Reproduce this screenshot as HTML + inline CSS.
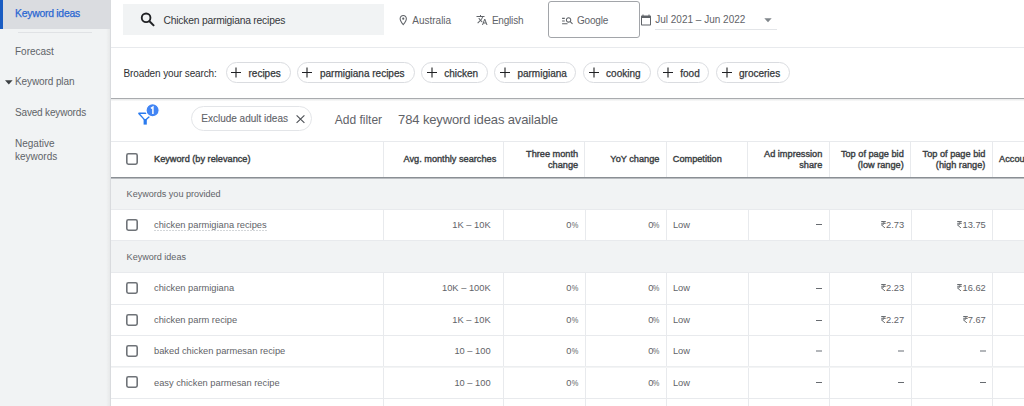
<!DOCTYPE html>
<html><head><meta charset="utf-8"><style>
html,body{margin:0;padding:0;}
body{width:1024px;height:406px;overflow:hidden;position:relative;background:#fff;font-family:"Liberation Sans", sans-serif;}
.t{position:absolute;white-space:nowrap;}
.r{position:absolute;box-sizing:content-box;}
svg.r{overflow:visible}
</style></head><body>
<div class="r" style="left:0px;top:0px;width:110px;height:406px;background:#f1f3f4"></div>
<div class="r" style="left:106px;top:0px;width:4px;height:406px;background:linear-gradient(90deg,rgba(0,0,0,0),rgba(0,0,0,0.045))"></div>
<div class="r" style="left:110px;top:0px;width:1px;height:406px;background:#d9dbde"></div>
<div class="r" style="left:0px;top:0px;width:110px;height:29px;background:#dadce0"></div>
<div class="r" style="left:0px;top:0px;width:3px;height:29px;background:#1a5cc2"></div>
<div class="r" style="left:18px;top:32px;width:74px;height:1px;background:#e0e2e5"></div>
<div class="t" style="left:15.00px;top:9.10px;font-size:10.4px;line-height:10.4px;color:#2a67d2;-webkit-text-stroke:0.25px #2a67d2;letter-spacing:-0.25px;">Keyword ideas</div>
<div class="t" style="left:15.00px;top:46.53px;font-size:10px;line-height:10px;color:#5f6368;">Forecast</div>
<svg class="r" style="left:4px;top:79px" width="10" height="7" viewBox="0 0 10 7"><path d="M1 1.3h7.6L4.8 5.4z" fill="#3c4043"/></svg>
<div class="t" style="left:15.00px;top:77.33px;font-size:10px;line-height:10px;color:#5f6368;letter-spacing:-0.1px;">Keyword plan</div>
<div class="t" style="left:15.00px;top:108.13px;font-size:10px;line-height:10px;color:#5f6368;letter-spacing:-0.17px;">Saved keywords</div>
<div class="t" style="left:15.00px;top:139.34px;font-size:10px;line-height:10px;color:#5f6368;">Negative</div>
<div class="t" style="left:15.00px;top:151.53px;font-size:10px;line-height:10px;color:#5f6368;">keywords</div>
<div class="r" style="left:123px;top:4px;width:261px;height:31px;background:#f1f3f4"></div>
<svg class="r" style="left:136px;top:8px" width="24" height="24" viewBox="0 0 24 24"><circle cx="10.1" cy="9.8" r="4.35" fill="none" stroke="#202124" stroke-width="1.85"/><path d="M13.2 13L18.1 17.9" stroke="#202124" stroke-width="2" stroke-linecap="butt"/></svg>
<div class="t" style="left:163.50px;top:15.68px;font-size:10.3px;line-height:10.3px;color:#35383b;letter-spacing:-0.21px;">Chicken parmigiana recipes</div>
<svg class="r" style="left:396.7px;top:13.5px" width="12.5" height="12.5" viewBox="0 0 24 24"><path fill="#5f6368" d="M12 2C8.13 2 5 5.13 5 9c0 5.25 7 13 7 13s7-7.750 7-13c0-3.87-3.13-7-7-7zM7 9c0-2.76 2.24-5 5-5s5 2.24 5 5c0 2.88-2.88 7.19-5 9.88C9.92 16.21 7 11.85 7 9z"/><circle fill="#5f6368" cx="12" cy="9" r="2.1"/></svg>
<div class="t" style="left:412.25px;top:15.54px;font-size:10px;line-height:10px;color:#5f6368;">Australia</div>
<svg class="r" style="left:476px;top:14.1px" width="12" height="12" viewBox="0 0 24 24"><path fill="#5f6368" d="M12.87 15.07l-2.54-2.51.03-.03c1.74-1.94 2.98-4.17 3.71-6.53H17V4h-7V2H8v2H1v1.99h11.17C11.5 7.92 10.44 9.75 9 11.35 8.07 10.32 7.3 9.19 6.69 8h-2c.73 1.63 1.73 3.17 2.98 4.560l-5.09 5.02L4 19l5-5 3.11 3.11.76-2.04zM18.5 10h-2L12 22h2l1.12-3h4.75L21 22h2l-4.5-12zm-2.62 7l1.62-4.33L19.12 17h-3.24z"/></svg>
<div class="t" style="left:491.90px;top:15.64px;font-size:10px;line-height:10px;color:#5f6368;letter-spacing:-0.2px;">English</div>
<div class="r" style="left:548px;top:1px;width:90px;height:35px;border:1px solid #a2a5a9;border-radius:3px;background:#fff"></div>
<svg class="r" style="left:560.8px;top:14.2px" width="13" height="13" viewBox="0 0 24 24"><path fill="#5f6368" d="M7 9H2V7h5v2zm0 3H2v2h5v-2zm13.59 7l-3.83-3.83c-.8.52-1.74.83-2.76.83-2.76 0-5-2.24-5-5s2.24-5 5-5 5 2.24 5 5c0 1.02-.31 1.96-.83 2.75L22 17.59 20.59 19zM17 11c0-1.65-1.35-3-3-3s-3 1.35-3 3 1.35 3 3 3 3-1.35 3-3zM2 19h10v-2H2v2z"/></svg>
<div class="t" style="left:576.90px;top:15.84px;font-size:10px;line-height:10px;color:#5f6368;letter-spacing:-0.15px;">Google</div>
<svg class="r" style="left:640px;top:13.9px" width="12" height="12" viewBox="0 0 24 24"><path fill="#5f6368" d="M20 3h-1V1h-2v2H7V1H5v2H4c-1.1 0-2 .9-2 2v16c0 1.1.9 2 2 2h16c1.1 0 2-.9 2-2V5c0-1.1-.9-2-2-2zm0 18H4V8h16v13z"/></svg>
<div class="t" style="left:655.25px;top:15.43px;font-size:10px;line-height:10px;color:#5f6368;">Jul 2021 – Jun 2022</div>
<svg class="r" style="left:764px;top:18px" width="8" height="5" viewBox="0 0 8 5"><path d="M0.3 0.2h7.4L4 4.3z" fill="#80868b"/></svg>
<div class="r" style="left:655px;top:29px;width:122px;height:1px;background:#e3e5e8"></div>
<div class="r" style="left:111px;top:47px;width:913px;height:1px;background:#e8eaed"></div>
<div class="t" style="left:123.50px;top:68.73px;font-size:10px;line-height:10px;color:#2d3033;letter-spacing:-0.12px;">Broaden your search:</div>
<div class="r" style="left:226px;top:62px;width:63px;height:19px;border:1px solid #dadce0;border-radius:11px;background:#fff"></div>
<svg class="r" style="left:231px;top:67px" width="10" height="10" viewBox="0 0 10 10"><path d="M5 0.5v10M0 5.5h10" stroke="#202124" stroke-width="1.1"/></svg>
<div class="t" style="left:248.50px;top:68.53px;font-size:10px;line-height:10px;color:#34373a;-webkit-text-stroke:0.25px #34373a;">recipes</div>
<div class="r" style="left:297px;top:62px;width:116px;height:19px;border:1px solid #dadce0;border-radius:11px;background:#fff"></div>
<svg class="r" style="left:302px;top:67px" width="10" height="10" viewBox="0 0 10 10"><path d="M5 0.5v10M0 5.5h10" stroke="#202124" stroke-width="1.1"/></svg>
<div class="t" style="left:320.00px;top:68.53px;font-size:10px;line-height:10px;color:#34373a;-webkit-text-stroke:0.25px #34373a;">parmigiana recipes</div>
<div class="r" style="left:421px;top:62px;width:65px;height:19px;border:1px solid #dadce0;border-radius:11px;background:#fff"></div>
<svg class="r" style="left:427px;top:67px" width="10" height="10" viewBox="0 0 10 10"><path d="M5 0.5v10M0 5.5h10" stroke="#202124" stroke-width="1.1"/></svg>
<div class="t" style="left:444.25px;top:68.53px;font-size:10px;line-height:10px;color:#34373a;-webkit-text-stroke:0.25px #34373a;">chicken</div>
<div class="r" style="left:494px;top:62px;width:80px;height:19px;border:1px solid #dadce0;border-radius:11px;background:#fff"></div>
<svg class="r" style="left:500px;top:67px" width="10" height="10" viewBox="0 0 10 10"><path d="M5 0.5v10M0 5.5h10" stroke="#202124" stroke-width="1.1"/></svg>
<div class="t" style="left:517.40px;top:68.53px;font-size:10px;line-height:10px;color:#34373a;-webkit-text-stroke:0.25px #34373a;">parmigiana</div>
<div class="r" style="left:583px;top:62px;width:66px;height:19px;border:1px solid #dadce0;border-radius:11px;background:#fff"></div>
<svg class="r" style="left:589px;top:67px" width="10" height="10" viewBox="0 0 10 10"><path d="M5 0.5v10M0 5.5h10" stroke="#202124" stroke-width="1.1"/></svg>
<div class="t" style="left:606.10px;top:68.53px;font-size:10px;line-height:10px;color:#34373a;-webkit-text-stroke:0.25px #34373a;">cooking</div>
<div class="r" style="left:657px;top:62px;width:50px;height:19px;border:1px solid #dadce0;border-radius:11px;background:#fff"></div>
<svg class="r" style="left:663px;top:67px" width="10" height="10" viewBox="0 0 10 10"><path d="M5 0.5v10M0 5.5h10" stroke="#202124" stroke-width="1.1"/></svg>
<div class="t" style="left:680.25px;top:68.53px;font-size:10px;line-height:10px;color:#34373a;-webkit-text-stroke:0.25px #34373a;">food</div>
<div class="r" style="left:716px;top:62px;width:72px;height:19px;border:1px solid #dadce0;border-radius:11px;background:#fff"></div>
<svg class="r" style="left:722px;top:67px" width="10" height="10" viewBox="0 0 10 10"><path d="M5 0.5v10M0 5.5h10" stroke="#202124" stroke-width="1.1"/></svg>
<div class="t" style="left:739.00px;top:68.53px;font-size:10px;line-height:10px;color:#34373a;-webkit-text-stroke:0.25px #34373a;">groceries</div>
<div class="r" style="left:111px;top:98px;width:913px;height:1px;background:#a9abae"></div>
<div class="r" style="left:111px;top:99px;width:913px;height:2px;background:linear-gradient(#e6e7e8,#fafafa)"></div>
<svg class="r" style="left:134px;top:102px" width="32" height="26" viewBox="0 0 32 26"><path d="M4.6 11.2H19L11.1 18.4Z" fill="none" stroke="#2a7bef" stroke-width="1.4" stroke-linejoin="bevel"/><rect x="9.6" y="17" width="3.2" height="5.6" fill="#2a7bef"/><circle cx="18.6" cy="8.3" r="6.6" fill="#4285f4" stroke="#fff" stroke-width="1.2"/><path d="M16.9 6.3L18.9 5.1V12" fill="none" stroke="#fff" stroke-width="1.5"/></svg>
<div class="r" style="left:191px;top:106px;width:119px;height:23px;border:1px solid #e3e5e8;border-radius:13px;background:#fff"></div>
<div class="t" style="left:201.25px;top:114.23px;font-size:10px;line-height:10px;color:#5f6368;-webkit-text-stroke:0.1px #5f6368;">Exclude adult ideas</div>
<svg class="r" style="left:296px;top:114.6px" width="9" height="8" viewBox="0 0 9 8"><path d="M0.6 0.4l7.8 7.4M8.4 0.4L0.6 7.8" stroke="#4d5156" stroke-width="1.15"/></svg>
<div class="t" style="left:334.75px;top:114.44px;font-size:12px;line-height:12px;color:#5f6368;">Add filter</div>
<div class="t" style="left:398.10px;top:113.40px;font-size:13px;line-height:13px;color:#5f6368;letter-spacing:-0.13px;">784 keyword ideas available</div>
<div class="r" style="left:111px;top:141px;width:913px;height:1px;background:#e8eaed"></div>
<svg class="r" style="left:126px;top:153px" width="12" height="12" viewBox="0 0 12 12"><rect x="0.8" y="0.8" width="10.4" height="10.4" rx="1.6" fill="none" stroke="#6f7378" stroke-width="1.6"/></svg>
<div class="t" style="left:154.00px;top:154.71px;font-size:9.2px;line-height:9.2px;color:#3a3e42;-webkit-text-stroke:0.38px #3a3e42;">Keyword (by relevance)</div>
<div class="r" style="left:383px;top:142px;width:1px;height:35px;background:#e8eaed"></div>
<div class="r" style="left:503px;top:142px;width:1px;height:35px;background:#e8eaed"></div>
<div class="r" style="left:584px;top:142px;width:1px;height:35px;background:#e8eaed"></div>
<div class="r" style="left:666px;top:142px;width:1px;height:35px;background:#e8eaed"></div>
<div class="r" style="left:747px;top:142px;width:1px;height:35px;background:#e8eaed"></div>
<div class="r" style="left:829px;top:142px;width:1px;height:35px;background:#e8eaed"></div>
<div class="r" style="left:910px;top:142px;width:1px;height:35px;background:#e8eaed"></div>
<div class="r" style="left:992px;top:142px;width:1px;height:35px;background:#e8eaed"></div>
<div class="t" style="right:527.75px;top:154.71px;font-size:9.2px;line-height:9.2px;color:#3a3e42;-webkit-text-stroke:0.38px #3a3e42;">Avg. monthly searches</div>
<div class="t" style="right:445.90px;top:149.81px;font-size:9.2px;line-height:9.2px;color:#3a3e42;-webkit-text-stroke:0.38px #3a3e42;">Three month</div>
<div class="t" style="right:445.90px;top:161.31px;font-size:9.2px;line-height:9.2px;color:#3a3e42;-webkit-text-stroke:0.38px #3a3e42;">change</div>
<div class="t" style="right:364.60px;top:154.71px;font-size:9.2px;line-height:9.2px;color:#3a3e42;-webkit-text-stroke:0.38px #3a3e42;">YoY change</div>
<div class="t" style="left:672.75px;top:154.71px;font-size:9.2px;line-height:9.2px;color:#3a3e42;-webkit-text-stroke:0.38px #3a3e42;">Competition</div>
<div class="t" style="right:201.75px;top:149.81px;font-size:9.2px;line-height:9.2px;color:#3a3e42;-webkit-text-stroke:0.38px #3a3e42;">Ad impression</div>
<div class="t" style="right:201.75px;top:161.31px;font-size:9.2px;line-height:9.2px;color:#3a3e42;-webkit-text-stroke:0.38px #3a3e42;">share</div>
<div class="t" style="right:120.25px;top:149.81px;font-size:9.2px;line-height:9.2px;color:#3a3e42;-webkit-text-stroke:0.38px #3a3e42;">Top of page bid</div>
<div class="t" style="right:120.25px;top:161.31px;font-size:9.2px;line-height:9.2px;color:#3a3e42;-webkit-text-stroke:0.38px #3a3e42;">(low range)</div>
<div class="t" style="right:38.60px;top:149.81px;font-size:9.2px;line-height:9.2px;color:#3a3e42;-webkit-text-stroke:0.38px #3a3e42;">Top of page bid</div>
<div class="t" style="right:38.60px;top:161.31px;font-size:9.2px;line-height:9.2px;color:#3a3e42;-webkit-text-stroke:0.38px #3a3e42;">(high range)</div>
<div class="t" style="left:999.10px;top:154.71px;font-size:9.2px;line-height:9.2px;color:#3a3e42;-webkit-text-stroke:0.38px #3a3e42;">Accounts</div>
<div class="r" style="left:111px;top:177px;width:913px;height:1px;background:#8a8f94"></div>
<div class="r" style="left:111px;top:178px;width:913px;height:1px;background:#b9bcc0"></div>
<div class="r" style="left:111px;top:179px;width:913px;height:30px;background:#f1f3f4"></div>
<div class="r" style="left:111px;top:209px;width:913px;height:1px;background:#e8eaed"></div>
<div class="t" style="left:126.60px;top:190.14px;font-size:9.05px;line-height:9.05px;color:#5f6368;">Keywords you provided</div>
<div class="r" style="left:111px;top:241px;width:913px;height:31px;background:#f1f3f4"></div>
<div class="t" style="left:126.60px;top:252.84px;font-size:9.05px;line-height:9.05px;color:#5f6368;">Keyword ideas</div>
<div class="r" style="left:383px;top:210px;width:1px;height:30px;background:#e8eaed"></div>
<div class="r" style="left:383px;top:273px;width:1px;height:133px;background:#e8eaed"></div>
<div class="r" style="left:503px;top:210px;width:1px;height:30px;background:#e8eaed"></div>
<div class="r" style="left:503px;top:273px;width:1px;height:133px;background:#e8eaed"></div>
<div class="r" style="left:585px;top:210px;width:1px;height:30px;background:#e8eaed"></div>
<div class="r" style="left:585px;top:273px;width:1px;height:133px;background:#e8eaed"></div>
<div class="r" style="left:666px;top:210px;width:1px;height:30px;background:#e8eaed"></div>
<div class="r" style="left:666px;top:273px;width:1px;height:133px;background:#e8eaed"></div>
<div class="r" style="left:748px;top:210px;width:1px;height:30px;background:#e8eaed"></div>
<div class="r" style="left:748px;top:273px;width:1px;height:133px;background:#e8eaed"></div>
<div class="r" style="left:829px;top:210px;width:1px;height:30px;background:#e8eaed"></div>
<div class="r" style="left:829px;top:273px;width:1px;height:133px;background:#e8eaed"></div>
<div class="r" style="left:911px;top:210px;width:1px;height:30px;background:#e8eaed"></div>
<div class="r" style="left:911px;top:273px;width:1px;height:133px;background:#e8eaed"></div>
<div class="r" style="left:992px;top:210px;width:1px;height:30px;background:#e8eaed"></div>
<div class="r" style="left:992px;top:273px;width:1px;height:133px;background:#e8eaed"></div>
<div class="r" style="left:111px;top:240px;width:913px;height:1px;background:#e8eaed"></div>
<div class="r" style="left:111px;top:272px;width:913px;height:1px;background:#e8eaed"></div>
<div class="r" style="left:111px;top:304px;width:913px;height:1px;background:#e8eaed"></div>
<div class="r" style="left:111px;top:335px;width:913px;height:1px;background:#e8eaed"></div>
<div class="r" style="left:111px;top:398px;width:913px;height:1px;background:#e8eaed"></div>
<div class="r" style="left:111px;top:366px;width:913px;height:1px;background:#eceef0"></div>
<div class="r" style="left:111px;top:367px;width:913px;height:1px;background:#f3f4f5"></div>
<svg class="r" style="left:126px;top:219px" width="12" height="12" viewBox="0 0 12 12"><rect x="0.8" y="0.8" width="10.4" height="10.4" rx="1.6" fill="none" stroke="#6f7378" stroke-width="1.6"/></svg>
<div class="t" style="left:154.00px;top:220.63px;font-size:9.3px;line-height:9.3px;color:#5f6368;">chicken parmigiana recipes</div>
<div class="r" style="left:154px;top:230px;width:113px;height:1px;background:repeating-linear-gradient(90deg,#d3d6d9 0 1.6px,transparent 1.6px 3px)"></div>
<div class="t" style="right:533.40px;top:220.63px;font-size:9.3px;line-height:9.3px;color:#5f6368;">1K – 10K</div>
<div class="t" style="right:446.10px;top:220.63px;font-size:9.3px;line-height:9.3px;color:#5f6368;">0<span style="display:inline-block;transform:scaleX(0.8);transform-origin:100% 0;margin-left:-1.9px">%</span></div>
<div class="t" style="right:364.25px;top:220.63px;font-size:9.3px;line-height:9.3px;color:#5f6368;">0<span style="display:inline-block;transform:scaleX(0.8);transform-origin:100% 0;margin-left:-1.9px">%</span></div>
<div class="t" style="left:672.90px;top:220.63px;font-size:9.3px;line-height:9.3px;color:#5f6368;">Low</div>
<div class="r" style="left:816px;top:224px;width:6px;height:1px;background:#676b70;height:1.15px"></div>
<div class="t" style="right:119.90px;top:220.63px;font-size:9.3px;line-height:9.3px;color:#5f6368;"><svg width="5" height="7" viewBox="0 0 5 7" style="display:inline-block;vertical-align:0px;margin-right:0.1px"><path d="M0.2 0.5h4.6M0.2 2.3h4.6M0.9 0.5c2.9 0 2.9 3.4 0 3.4h-0.5l3.6 3.1" fill="none" stroke="#5f6368" stroke-width="0.9"/></svg>2.73</div>
<div class="t" style="right:38.25px;top:220.63px;font-size:9.3px;line-height:9.3px;color:#5f6368;"><svg width="5" height="7" viewBox="0 0 5 7" style="display:inline-block;vertical-align:0px;margin-right:0.1px"><path d="M0.2 0.5h4.6M0.2 2.3h4.6M0.9 0.5c2.9 0 2.9 3.4 0 3.4h-0.5l3.6 3.1" fill="none" stroke="#5f6368" stroke-width="0.9"/></svg>13.75</div>
<svg class="r" style="left:126px;top:282px" width="12" height="12" viewBox="0 0 12 12"><rect x="0.8" y="0.8" width="10.4" height="10.4" rx="1.6" fill="none" stroke="#6f7378" stroke-width="1.6"/></svg>
<div class="t" style="left:154.00px;top:284.13px;font-size:9.3px;line-height:9.3px;color:#5f6368;">chicken parmigiana</div>
<div class="t" style="right:533.40px;top:284.13px;font-size:9.3px;line-height:9.3px;color:#5f6368;">10K – 100K</div>
<div class="t" style="right:446.10px;top:284.13px;font-size:9.3px;line-height:9.3px;color:#5f6368;">0<span style="display:inline-block;transform:scaleX(0.8);transform-origin:100% 0;margin-left:-1.9px">%</span></div>
<div class="t" style="right:364.25px;top:284.13px;font-size:9.3px;line-height:9.3px;color:#5f6368;">0<span style="display:inline-block;transform:scaleX(0.8);transform-origin:100% 0;margin-left:-1.9px">%</span></div>
<div class="t" style="left:672.90px;top:284.13px;font-size:9.3px;line-height:9.3px;color:#5f6368;">Low</div>
<div class="r" style="left:816px;top:288px;width:6px;height:1px;background:#676b70;height:1.15px"></div>
<div class="t" style="right:119.90px;top:284.13px;font-size:9.3px;line-height:9.3px;color:#5f6368;"><svg width="5" height="7" viewBox="0 0 5 7" style="display:inline-block;vertical-align:0px;margin-right:0.1px"><path d="M0.2 0.5h4.6M0.2 2.3h4.6M0.9 0.5c2.9 0 2.9 3.4 0 3.4h-0.5l3.6 3.1" fill="none" stroke="#5f6368" stroke-width="0.9"/></svg>2.23</div>
<div class="t" style="right:38.25px;top:284.13px;font-size:9.3px;line-height:9.3px;color:#5f6368;"><svg width="5" height="7" viewBox="0 0 5 7" style="display:inline-block;vertical-align:0px;margin-right:0.1px"><path d="M0.2 0.5h4.6M0.2 2.3h4.6M0.9 0.5c2.9 0 2.9 3.4 0 3.4h-0.5l3.6 3.1" fill="none" stroke="#5f6368" stroke-width="0.9"/></svg>16.62</div>
<svg class="r" style="left:126px;top:314px" width="12" height="12" viewBox="0 0 12 12"><rect x="0.8" y="0.8" width="10.4" height="10.4" rx="1.6" fill="none" stroke="#6f7378" stroke-width="1.6"/></svg>
<div class="t" style="left:154.00px;top:316.13px;font-size:9.3px;line-height:9.3px;color:#5f6368;">chicken parm recipe</div>
<div class="t" style="right:533.40px;top:316.13px;font-size:9.3px;line-height:9.3px;color:#5f6368;">1K – 10K</div>
<div class="t" style="right:446.10px;top:316.13px;font-size:9.3px;line-height:9.3px;color:#5f6368;">0<span style="display:inline-block;transform:scaleX(0.8);transform-origin:100% 0;margin-left:-1.9px">%</span></div>
<div class="t" style="right:364.25px;top:316.13px;font-size:9.3px;line-height:9.3px;color:#5f6368;">0<span style="display:inline-block;transform:scaleX(0.8);transform-origin:100% 0;margin-left:-1.9px">%</span></div>
<div class="t" style="left:672.90px;top:316.13px;font-size:9.3px;line-height:9.3px;color:#5f6368;">Low</div>
<div class="r" style="left:816px;top:320px;width:6px;height:1px;background:#676b70;height:1.15px"></div>
<div class="t" style="right:119.90px;top:316.13px;font-size:9.3px;line-height:9.3px;color:#5f6368;"><svg width="5" height="7" viewBox="0 0 5 7" style="display:inline-block;vertical-align:0px;margin-right:0.1px"><path d="M0.2 0.5h4.6M0.2 2.3h4.6M0.9 0.5c2.9 0 2.9 3.4 0 3.4h-0.5l3.6 3.1" fill="none" stroke="#5f6368" stroke-width="0.9"/></svg>2.27</div>
<div class="t" style="right:38.25px;top:316.13px;font-size:9.3px;line-height:9.3px;color:#5f6368;"><svg width="5" height="7" viewBox="0 0 5 7" style="display:inline-block;vertical-align:0px;margin-right:0.1px"><path d="M0.2 0.5h4.6M0.2 2.3h4.6M0.9 0.5c2.9 0 2.9 3.4 0 3.4h-0.5l3.6 3.1" fill="none" stroke="#5f6368" stroke-width="0.9"/></svg>7.67</div>
<svg class="r" style="left:126px;top:345px" width="12" height="12" viewBox="0 0 12 12"><rect x="0.8" y="0.8" width="10.4" height="10.4" rx="1.6" fill="none" stroke="#6f7378" stroke-width="1.6"/></svg>
<div class="t" style="left:154.00px;top:347.33px;font-size:9.3px;line-height:9.3px;color:#5f6368;">baked chicken parmesan recipe</div>
<div class="t" style="right:533.40px;top:347.33px;font-size:9.3px;line-height:9.3px;color:#5f6368;">10 – 100</div>
<div class="t" style="right:446.10px;top:347.33px;font-size:9.3px;line-height:9.3px;color:#5f6368;">0<span style="display:inline-block;transform:scaleX(0.8);transform-origin:100% 0;margin-left:-1.9px">%</span></div>
<div class="t" style="right:364.25px;top:347.33px;font-size:9.3px;line-height:9.3px;color:#5f6368;">0<span style="display:inline-block;transform:scaleX(0.8);transform-origin:100% 0;margin-left:-1.9px">%</span></div>
<div class="t" style="left:672.90px;top:347.33px;font-size:9.3px;line-height:9.3px;color:#5f6368;">Low</div>
<div class="r" style="left:816px;top:350px;width:6px;height:1px;background:#b3b6ba;height:2px"></div>
<div class="r" style="left:898px;top:350px;width:6px;height:1px;background:#b3b6ba;height:2px"></div>
<div class="r" style="left:980px;top:350px;width:6px;height:1px;background:#b3b6ba;height:2px"></div>
<svg class="r" style="left:126px;top:376px" width="12" height="12" viewBox="0 0 12 12"><rect x="0.8" y="0.8" width="10.4" height="10.4" rx="1.6" fill="none" stroke="#6f7378" stroke-width="1.6"/></svg>
<div class="t" style="left:154.00px;top:378.73px;font-size:9.3px;line-height:9.3px;color:#5f6368;">easy chicken parmesan recipe</div>
<div class="t" style="right:533.40px;top:378.73px;font-size:9.3px;line-height:9.3px;color:#5f6368;">10 – 100</div>
<div class="t" style="right:446.10px;top:378.73px;font-size:9.3px;line-height:9.3px;color:#5f6368;">0<span style="display:inline-block;transform:scaleX(0.8);transform-origin:100% 0;margin-left:-1.9px">%</span></div>
<div class="t" style="right:364.25px;top:378.73px;font-size:9.3px;line-height:9.3px;color:#5f6368;">0<span style="display:inline-block;transform:scaleX(0.8);transform-origin:100% 0;margin-left:-1.9px">%</span></div>
<div class="t" style="left:672.90px;top:378.73px;font-size:9.3px;line-height:9.3px;color:#5f6368;">Low</div>
<div class="r" style="left:816px;top:382px;width:6px;height:1px;background:#676b70;height:1.15px"></div>
<div class="r" style="left:898px;top:382px;width:6px;height:1px;background:#676b70;height:1.15px"></div>
<div class="r" style="left:980px;top:382px;width:6px;height:1px;background:#676b70;height:1.15px"></div>
</body></html>
